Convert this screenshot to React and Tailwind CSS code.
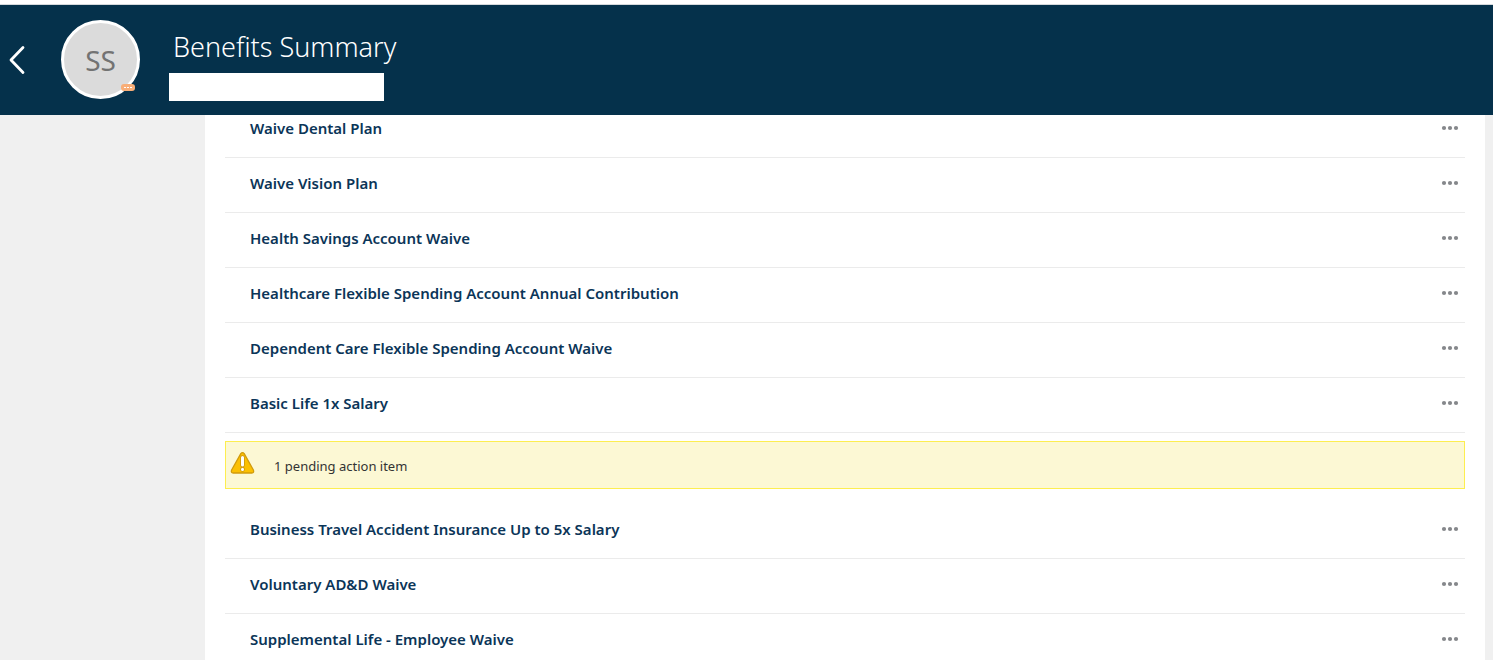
import React from 'react';

const plansBefore = [
    'Waive Dental Plan',
    'Waive Vision Plan',
    'Health Savings Account Waive',
    'Healthcare Flexible Spending Account Annual Contribution',
    'Dependent Care Flexible Spending Account Waive',
    'Basic Life 1x Salary',
];

const plansAfter = [
    'Business Travel Accident Insurance Up to 5x Salary',
    'Voluntary AD&D Waive',
    'Supplemental Life - Employee Waive',
];

const PlanRow = ({ name }) => (
    <li className="flex h-[55px] items-center justify-between border-b border-[#ebebeb] pb-1 pl-[25px] pr-[3px]">
        <h2 className="text-[15px] leading-5 font-semibold text-[#0b3558]">{name}</h2>
        <button type="button" aria-label={`Actions for ${name}`} className="flex h-6 w-6 cursor-pointer items-center justify-center">
            <svg className="h-4 w-[18px]" viewBox="0 0 18 16" fill="#85878b">
                <circle cx="3" cy="8" r="2.1" />
                <circle cx="9" cy="8" r="2.1" />
                <circle cx="15" cy="8" r="2.1" />
            </svg>
        </button>
    </li>
);

const Header = () => (
    <header className="z-10 flex h-[110px] shrink-0 items-center bg-[#05314b] text-white">
        <button type="button" aria-label="Back" className="ml-2 flex h-10 w-[18px] cursor-pointer items-center justify-center">
            <svg className="h-8 w-[18px]" viewBox="0 0 18 32" fill="none" stroke="currentColor" strokeWidth="2.8" strokeLinecap="round" strokeLinejoin="round">
                <path d="M15 3.5 3 16l12 12.5" />
            </svg>
        </button>

        {/* Avatar */}
        <div className="relative mb-0.5 ml-[35px] flex h-[79px] w-[79px] items-center justify-center rounded-full border-3 border-white bg-[#dbdbdb] pt-0.5 text-[28px] leading-8 text-[#737373]">
            SS
            <svg className="absolute right-[2px] bottom-[5px] h-[7px] w-[14px]" viewBox="0 0 14 7">
                <rect width="14" height="7" rx="3" fill="#f8ae78" />
                <path d="M3 3h2v1H3zM6 3h2v1H6zM9 3h2v1H9z" fill="#fff" />
            </svg>
        </div>

        <div className="ml-[29px] pt-2.5">
            <h1 className="ml-1 text-[27px] leading-9 font-light">Benefits Summary</h1>
            <div className="mt-2 h-7 w-[215px] bg-white" />
        </div>
    </header>
);

const PendingNotice = () => (
    <li className="mt-2 mb-[15px] flex h-12 items-center border border-[#fdee50] bg-[#fcf8d4] pl-1">
        <svg className="mb-1 h-6 w-[26px]" viewBox="0 0 26 24">
            <path d="M10.8 2.6Q12.5 .5 14.2 2.6L23.4 19Q24.4 21.9 21.8 22H3.2Q.6 21.9 1.6 19Z" fill="#fbc002" stroke="#d19b0d" strokeWidth="1.3" strokeLinejoin="round" />
            <path d="M12.5 6.5v7.5M12.5 18.3v.2" fill="none" stroke="#c99410" strokeWidth="4.6" strokeLinecap="round" />
            <path d="M12.5 6.5v7.5M12.5 18.3v.2" fill="none" stroke="#fff" strokeWidth="3" strokeLinecap="round" />
        </svg>
        <p className="ml-[18px] pt-0.5 text-[13px] leading-5 text-[#333]">1 pending action item</p>
    </li>
);

const App = () => {
    return (
        <div className="flex h-screen flex-col overflow-hidden bg-[#f0f0f0] font-['Segoe_UI','Noto_Sans',sans-serif]">
            <div className="h-[5px] shrink-0 border-b border-[#d5d9dc] bg-white" />
            <Header />
            <main className="min-h-0 flex-1 overflow-hidden pl-[205px] pr-2">
                {/* The list is scrolled part of the way under the header */}
                <ul className="-mt-3 min-h-full bg-white px-5">
                    {plansBefore.map((name) => (
                        <PlanRow key={name} name={name} />
                    ))}
                    <PendingNotice />
                    {plansAfter.map((name) => (
                        <PlanRow key={name} name={name} />
                    ))}
                </ul>
            </main>
        </div>
    );
};

export default App;
